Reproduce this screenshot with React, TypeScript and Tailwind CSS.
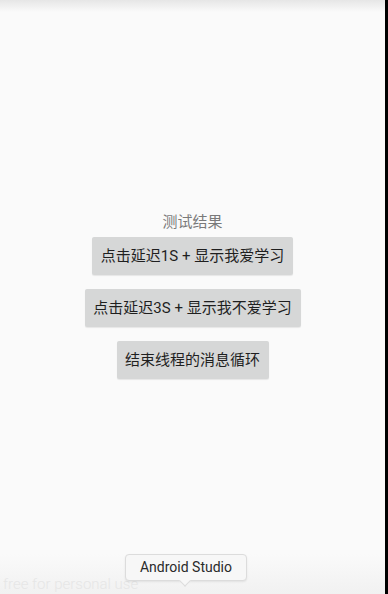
const font = { fontFamily: 'Roboto, "Noto Sans CJK SC", sans-serif' };

function ActionButton({ label, width }: { label: string; width: string }) {
  return (
    <button
      type="button"
      className={`h-[38px] rounded-[2px] bg-[#d6d7d7] text-center text-[15px] leading-none text-[#1f1f1f] shadow-[0_1px_1px_rgba(0,0,0,0.08)] ${width}`}
    >
      {label}
    </button>
  );
}

export default function App() {
  return (
    <div className="flex h-[594px] w-[388px] overflow-hidden bg-black" style={font}>
      <div className="relative flex h-full w-[385px] flex-col bg-[#fafafa]">
        <div className="h-[12px] bg-gradient-to-b from-[#e6e6e6] to-[#fafafa]" />
        <div className="flex flex-col items-center pt-[200px]">
          <span className="text-[15px] leading-[20px] text-[#7a7a7a]">测试结果</span>
          <div className="mt-[5px] flex flex-col items-center gap-[14px]">
            <ActionButton label="点击延迟1S + 显示我爱学习" width="w-[201px]" />
            <ActionButton label="点击延迟3S + 显示我不爱学习" width="w-[216px]" />
            <ActionButton label="结束线程的消息循环" width="w-[152px]" />
          </div>
        </div>
        <div className="mt-auto flex h-[40px] items-end bg-gradient-to-b from-[#fafafa] to-[#f1f1f1] pb-[1px]">
          <span className="pl-[3px] text-[15px] font-light leading-[18px] text-[#e6e6e6]">
            free for personal use
          </span>
        </div>
        <div className="absolute left-[125px] top-[554px] flex h-[27px] w-[122px] items-center justify-center rounded-[4px] border border-[#dcdcdc] bg-[#f7f7f7] text-[14px] text-[#2a2a2a] shadow-[0_1px_2px_rgba(0,0,0,0.08)]">
          Android Studio
          <span className="absolute -bottom-[5px] left-[55px] h-[8px] w-[8px] rotate-45 border-b border-r border-[#dcdcdc] bg-[#f7f7f7]" />
        </div>
      </div>
    </div>
  );
}
